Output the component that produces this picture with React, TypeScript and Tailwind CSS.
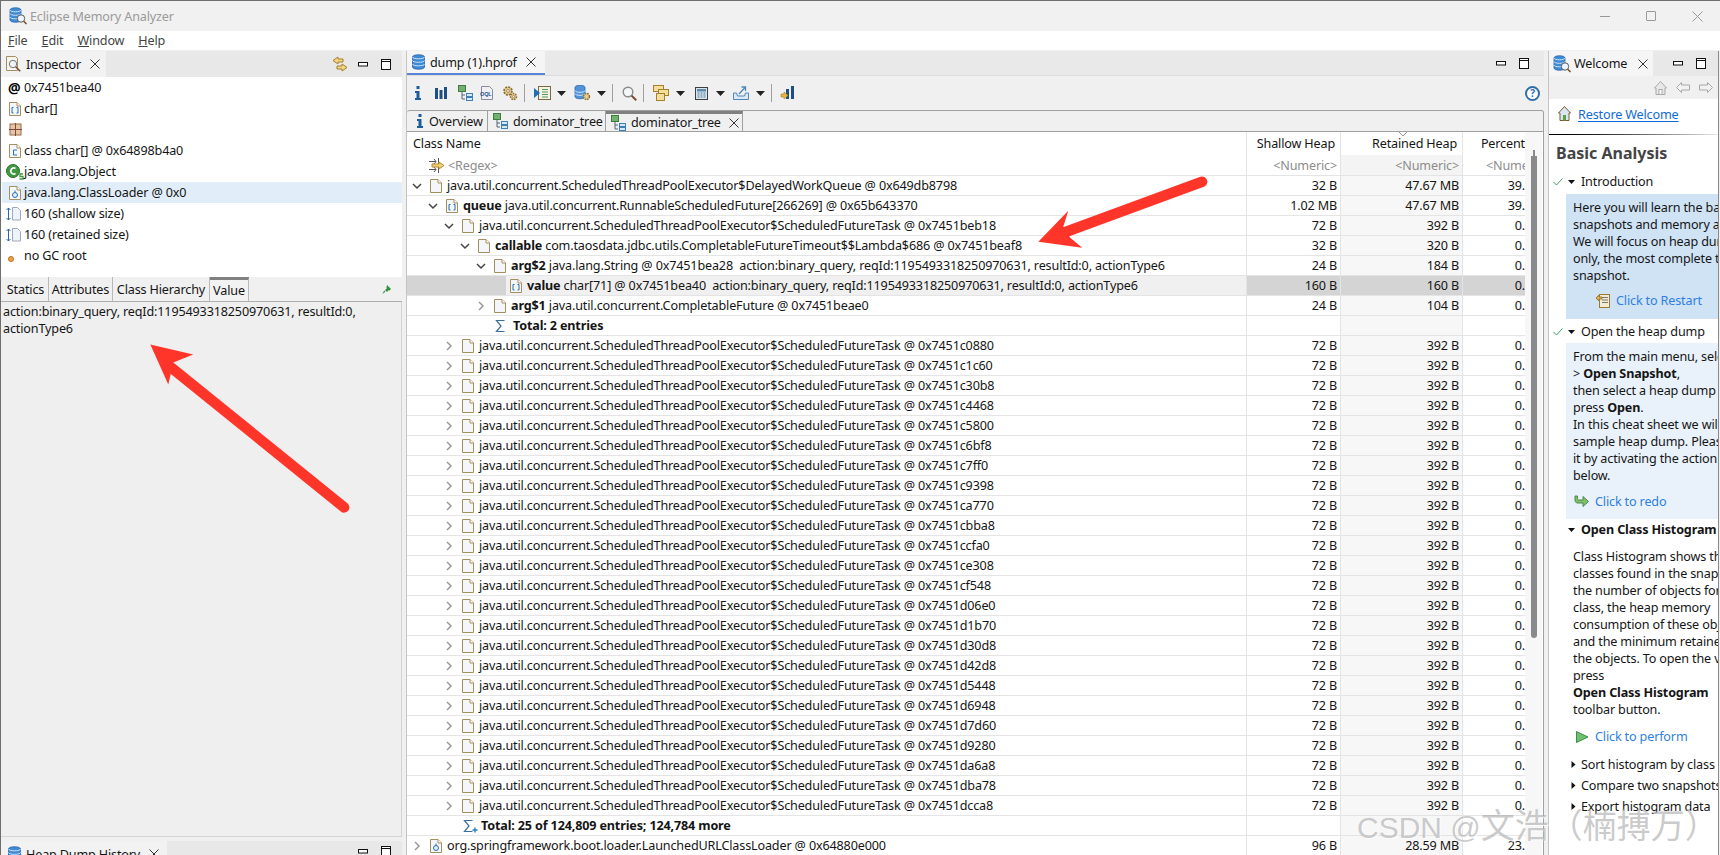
import type { ReactNode } from 'react'

type Kind = 'page' | 'array' | 'loader' | 'sum' | 'sumMore'

interface Row {
  depth: number
  open?: boolean
  kind: Kind
  label?: string
  text: string
  bold?: boolean
  shallow?: string
  retained?: string
  percent?: string
  selected?: boolean
}

const TASK = 'java.util.concurrent.ScheduledThreadPoolExecutor$ScheduledFutureTask @ '

const taskAddresses = [
  'c0880', 'c1c60', 'c30b8', 'c4468', 'c5800', 'c6bf8', 'c7ff0', 'c9398', 'ca770', 'cbba8', 'ccfa0', 'ce308',
  'cf548', 'd06e0', 'd1b70', 'd30d8', 'd42d8', 'd5448', 'd6948', 'd7d60', 'd9280', 'da6a8', 'dba78', 'dcca8',
]

const rows: Row[] = [
  { depth: 0, open: true, kind: 'page', text: 'java.util.concurrent.ScheduledThreadPoolExecutor$DelayedWorkQueue @ 0x649db8798', shallow: '32 B', retained: '47.67 MB', percent: '39.' },
  { depth: 1, open: true, kind: 'array', label: 'queue', text: 'java.util.concurrent.RunnableScheduledFuture[266269] @ 0x65b643370', shallow: '1.02 MB', retained: '47.67 MB', percent: '39.' },
  { depth: 2, open: true, kind: 'page', text: TASK + '0x7451beb18', shallow: '72 B', retained: '392 B', percent: '0.' },
  { depth: 3, open: true, kind: 'page', label: 'callable', text: 'com.taosdata.jdbc.utils.CompletableFutureTimeout$$Lambda$686 @ 0x7451beaf8', shallow: '32 B', retained: '320 B', percent: '0.' },
  { depth: 4, open: true, kind: 'page', label: 'arg$2', text: 'java.lang.String @ 0x7451bea28  action:binary_query, reqId:1195493318250970631, resultId:0, actionType6', shallow: '24 B', retained: '184 B', percent: '0.' },
  { depth: 5, kind: 'array', label: 'value', text: 'char[71] @ 0x7451bea40  action:binary_query, reqId:1195493318250970631, resultId:0, actionType6', shallow: '160 B', retained: '160 B', percent: '0.', selected: true },
  { depth: 4, open: false, kind: 'page', label: 'arg$1', text: 'java.util.concurrent.CompletableFuture @ 0x7451beae0', shallow: '24 B', retained: '104 B', percent: '0.' },
  { depth: 4, kind: 'sum', text: 'Total: 2 entries', bold: true },
  ...taskAddresses.map((a): Row => ({ depth: 2, open: false, kind: 'page', text: TASK + '0x7451' + a, shallow: '72 B', retained: '392 B', percent: '0.' })),
  { depth: 2, kind: 'sumMore', text: 'Total: 25 of 124,809 entries; 124,784 more', bold: true },
  { depth: 0, open: false, kind: 'loader', text: 'org.springframework.boot.loader.LaunchedURLClassLoader @ 0x64880e000', shallow: '96 B', retained: '28.59 MB', percent: '23.' },
]

const Chevron = ({ open }: { open: boolean }) => (
  <svg width="10" height="10" viewBox="0 0 10 10" fill="none" strokeWidth="1.5" stroke={open ? '#444' : '#999'}>
    {open ? <path d="M1 3l4 4 4-4" /> : <path d="M3 1l4 4-4 4" />}
  </svg>
)

const PageShape = ({ children }: { children?: ReactNode }) => (
  <svg width="12" height="14" viewBox="0 0 12 14">
    <path d="M.5.5h7.5l3.5 3.5v9.5h-11z" fill="#f3f7fc" stroke="#a58f5e" />
    <path d="M8 .5v3.5h3.5" fill="#fff" stroke="#a58f5e" />
    {children}
  </svg>
)

const ArrayIcon = () => (
  <PageShape>
    <path d="M4.500 5.500h-1.500v5.500h1.500M7.500 5.500h1.500v5.500h-1.500" fill="none" stroke="#2a6fb0" />
  </PageShape>
)

const LoaderIcon = () => (
  <PageShape>
    <path d="M6 4.500v2" stroke="#2a6fb0" />
    <circle cx="6" cy="9" r="2.500" fill="#e3eefa" stroke="#2a6fb0" />
  </PageShape>
)

const ClassIcon = () => (
  <PageShape>
    <path d="M8 6h-3.500v5h3.500" fill="none" stroke="#2a6fb0" />
  </PageShape>
)

const SumIcon = ({ more }: { more?: boolean }) => (
  <svg width="15" height="14" viewBox="0 0 15 14" fill="none">
    <path d="M9.500 1.500h-8l4.500 5.500-4.500 5.500h8" stroke="#3b6f9e" strokeWidth="1.200" />
    {more && <path d="M12 8.500v5M9.500 11h5" stroke="#2a7fc0" strokeWidth="1.400" />}
  </svg>
)

const RowIcon = ({ kind }: { kind: Kind }) => {
  if (kind === 'array') return <ArrayIcon />
  if (kind === 'loader') return <LoaderIcon />
  if (kind === 'sum') return <SumIcon />
  if (kind === 'sumMore') return <SumIcon more />
  return <PageShape />
}

const CloseX = () => (
  <svg width="10" height="10" viewBox="0 0 10 10" className="shrink-0" stroke="#333" strokeWidth="1" fill="none">
    <path d="M.5.500l9 9M9.500.500l-9 9" />
  </svg>
)

const MinMax = ({ className }: { className?: string }) => (
  <div className={`flex items-center gap-[13px] ${className ?? ''}`}>
    <svg width="10" height="5" viewBox="0 0 10 5" fill="#fff" stroke="#111">
      <rect x=".5" y=".5" width="9" height="3.500" />
    </svg>
    <svg width="10" height="11" viewBox="0 0 10 11" fill="#fff" stroke="#111">
      <rect x=".5" y=".5" width="9" height="10" />
      <path d="M.5 2.500h9" />
    </svg>
  </div>
)

const DbStack = () => (
  <svg width="13" height="16" viewBox="0 0 13 16" className="shrink-0">
    <path d="M.5 3c0-3 12-3 12 0v10c0 3-12 3-12 0z" fill="#3f8ad6" stroke="#2a65a8" strokeWidth=".8" />
    <path d="M.5 3c0 2.400 12 2.400 12 0M.5 6.500c0 2.400 12 2.400 12 0M.5 10c0 2.400 12 2.400 12 0" fill="none" stroke="#cfe3f7" />
  </svg>
)

const DbLensIcon = () => (
  <svg width="18" height="18" viewBox="0 0 18 18" className="shrink-0">
    <path d="M1 3c0-3 11-3 11 0v10c0 3-11 3-11 0z" fill="#3f8ad6" stroke="#2a65a8" strokeWidth=".8" />
    <path d="M1 3c0 2.400 11 2.400 11 0M1 6.500c0 2.400 11 2.400 11 0M1 10c0 2.400 11 2.400 11 0" fill="none" stroke="#cfe3f7" />
    <circle cx="12" cy="11.500" r="3.700" fill="#eef6fc" stroke="#555" />
    <path d="M14.700 14.200l2.800 2.800" stroke="#7a4a2a" strokeWidth="1.500" />
  </svg>
)

const InspectorIcon = () => (
  <svg width="16" height="16" viewBox="0 0 16 16" className="shrink-0">
    <path d="M.5.500h9l2 2v12h-11z" fill="#f4f4f0" stroke="#a58f5e" />
    <circle cx="7" cy="8" r="3.700" fill="#eef3f7" stroke="#777" />
    <path d="M9.700 10.700l4.500 4.500" stroke="#7a4a2a" strokeWidth="1.600" />
  </svg>
)

const InfoIcon = () => (
  <svg width="8" height="14" viewBox="0 0 8 14" fill="#1d5c9c">
    <rect x="2.500" y="0" width="3" height="3" />
    <path d="M1 5h4.500v7h1.500v2h-6v-2h1.500v-5h-1.500z" />
  </svg>
)

const TreeIcon = () => (
  <svg width="15" height="16" viewBox="0 0 15 16" fill="none" className="shrink-0">
    <rect x=".5" y=".5" width="7" height="6" fill="#72b072" stroke="#3f7d3f" />
    <path d="M4 7v7h3M4 10h3" stroke="#567" />
    <rect x="8.500" y="8.500" width="6" height="3" fill="#d8e8f6" stroke="#3f7fb8" />
    <rect x="8.500" y="12.500" width="6" height="3" fill="#d8e8f6" stroke="#3f7fb8" />
  </svg>
)

const GearIcon = ({ size = 16 }: { size?: number }) => (
  <svg width={size} height={size} viewBox="0 0 16 16" fill="#e3c68a" stroke="#8a6a35">
    <circle cx="6" cy="6" r="4" strokeDasharray="2 1.100" strokeWidth="1.600" />
    <circle cx="6" cy="6" r="1.400" fill="#fff" strokeWidth=".7" />
    <circle cx="11.500" cy="11.500" r="3" strokeDasharray="1.600 1" strokeWidth="1.400" />
    <circle cx="11.500" cy="11.500" r="1" fill="#fff" strokeWidth=".6" />
  </svg>
)

const DropArrow = ({ className }: { className: string }) => (
  <svg width="9" height="5" viewBox="0 0 9 5" className={className} fill="#222">
    <path d="M0 0h9l-4.500 5z" />
  </svg>
)

const Sep = ({ className }: { className: string }) => <div className={`h-[18px] w-px bg-[#a0a0a0] ${className}`} />

const Tool = ({ className, children }: { className: string; children: ReactNode }) => (
  <div className={`flex h-5 w-5 items-center justify-center ${className}`}>{children}</div>
)

const Toolbar = () => (
  <div className="flex h-[34px] items-center bg-[#f0f0f0] pl-[1px]">
    <Tool className="ml-0"><InfoIcon /></Tool>
    <Tool className="ml-[3px]">
      <svg width="12" height="12" viewBox="0 0 12 12" fill="#1f4f82"><rect y="1" width="3" height="11" /><rect x="4.500" y="3" width="3" height="9" /><rect x="9" width="3" height="12" /></svg>
    </Tool>
    <Tool className="ml-[4px]"><TreeIcon /></Tool>
    <Tool className="ml-[2px]">
      <svg width="14" height="14" viewBox="0 0 14 14">
        <path d="M1.500.500h8l3 3v10h-11z" fill="#eef0f4" stroke="#8b8b9c" />
        <text x="0" y="9.500" fontSize="5.500" fontWeight="700" fill="#2d4f8f" fontFamily="Liberation Sans">OQL</text>
      </svg>
    </Tool>
    <Tool className="ml-[3px]"><GearIcon /></Tool>
    <Sep className="ml-[4px]" />
    <Tool className="ml-[7px]">
      <svg width="17" height="14" viewBox="0 0 17 14">
        <rect x="4.500" y=".5" width="12" height="13" fill="#f3f2e4" stroke="#7a6a44" />
        <path d="M8 3.500h6M8 6h6M8 8.500h6M8 11h6" stroke="#4d9a5a" />
        <path d="M0 2l6 5-6 5z" fill="#1f6fb5" />
      </svg>
    </Tool>
    <DropArrow className="ml-[5px]" />
    <Tool className="ml-[6px]">
      <svg width="17" height="16" viewBox="0 0 17 16">
        <path d="M1 2.500c0-3 10-3 10 0v9c0 3-10 3-10 0z" fill="#4f94da" stroke="#2a65a8" strokeWidth=".8" />
        <path d="M1 5.500c0 2.400 10 2.400 10 0M1 8.500c0 2.400 10 2.400 10 0" fill="none" stroke="#d3e5f7" />
        <circle cx="12.500" cy="11.500" r="3" fill="#e6c98c" stroke="#8a6a35" strokeDasharray="1.600 .8" strokeWidth="1.400" />
      </svg>
    </Tool>
    <DropArrow className="ml-[5px]" />
    <Sep className="ml-[6px]" />
    <Tool className="ml-[6px]">
      <svg width="15" height="15" viewBox="0 0 15 15" fill="none">
        <circle cx="6" cy="6" r="4.800" fill="#f4f7f8" stroke="#8a8a8a" strokeWidth="1.400" />
        <path d="M9.600 9.600l4.600 4.600" stroke="#7a4a2a" strokeWidth="2" />
      </svg>
    </Tool>
    <Sep className="ml-[4px]" />
    <Tool className="ml-[7px]">
      <svg width="16" height="16" viewBox="0 0 16 16" fill="#f5dd9a" stroke="#a5802f">
        <rect x=".5" y=".5" width="10" height="6" />
        <rect x="5.500" y="4.500" width="10" height="6" />
        <rect x="3.500" y="8.500" width="8" height="7" />
      </svg>
    </Tool>
    <DropArrow className="ml-[5px]" />
    <Tool className="ml-[6px]">
      <svg width="13" height="13" viewBox="0 0 13 13">
        <rect x=".5" y=".5" width="12" height="12" fill="#d8e6ee" stroke="#3f3f3f" />
        <rect x="2" y="2" width="9" height="2.500" fill="#5f8aa8" />
        <path d="M2.500 6h2M5.500 6h2M8.500 6h2M2.500 8h2M5.500 8h2M8.500 8h2M2.500 10h2M5.500 10h2M8.500 10h2" stroke="#4f7c9f" />
      </svg>
    </Tool>
    <DropArrow className="ml-[5px]" />
    <Tool className="ml-[6px]">
      <svg width="16" height="14" viewBox="0 0 16 14" fill="none" stroke="#4f86bc">
        <path d="M.5 7v6.500h15v-6.500h-3l-1 3h-7l-1-3z" fill="#dce9f5" />
        <path d="M6 8l6-6.500M8.500 1h4v4" strokeWidth="1.300" />
      </svg>
    </Tool>
    <DropArrow className="ml-[5px]" />
    <Sep className="ml-[6px]" />
    <Tool className="ml-[5px]">
      <svg width="15" height="14" viewBox="0 0 15 14">
        <rect x="6" y="3" width="3" height="10" fill="#1f4f82" />
        <rect x="11" y="0" width="3" height="13" fill="#1f4f82" />
        <path d="M1 8h3v-2l4 3.500-4 3.500v-2h-3z" fill="#e8b83a" stroke="#a5802f" strokeWidth=".6" />
      </svg>
    </Tool>
    <div className="ml-auto mr-[4px] flex h-[15px] w-[15px] items-center justify-center rounded-full border-2 border-[#2f6fa8] bg-white text-[10px] font-bold leading-none text-[#2f6fa8]">?</div>
  </div>
)

const TableRow = ({ row }: { row: Row }) => {
  const gray = row.selected ? 'bg-[#d4d4d4]' : ''
  const isSum = row.kind === 'sum' || row.kind === 'sumMore'
  return (
    <div className="flex h-5 shrink-0 border-t border-[#e4e4e4]">
      <div className={`flex w-[840px] items-center overflow-hidden border-r border-[#e4e4e4] ${row.selected ? 'bg-[#f0f0f0]' : ''}`}>
        <div className={`flex h-full shrink-0 items-center ${gray}`} style={{ paddingLeft: row.depth * 16 }}>
          <div className="flex w-[19px] justify-center">{row.open !== undefined && <Chevron open={row.open} />}</div>
        </div>
        <div className={`flex w-[21px] shrink-0 items-center ${isSum ? 'pl-[5px]' : 'pl-1'}`}>
          <RowIcon kind={row.kind} />
        </div>
        <div className={`whitespace-pre ${row.bold ? 'ml-[2px] font-bold' : ''}`}>
          {row.label && <span className="font-bold">{row.label} </span>}
          {row.text}
        </div>
      </div>
      <div className={`w-[94px] border-r border-[#e4e4e4] pr-[3px] text-right leading-[19px] ${gray}`}>{row.shallow}</div>
      <div className={`w-[122px] border-r border-[#e4e4e4] pr-[3px] text-right leading-[19px] ${row.selected ? 'bg-[#d4d4d4]' : 'bg-[#f7f7f7]'}`}>{row.retained}</div>
      <div className={`w-[62px] overflow-hidden text-right leading-[19px] ${gray}`}>{row.percent}</div>
    </div>
  )
}

const ResultTable = () => (
  <div className="flex min-h-0 flex-1 bg-white">
    <div className="flex w-[1118px] flex-col">
      <div className="flex h-[23px] shrink-0 leading-[24px]">
        <div className="w-[840px] border-r border-[#e4e4e4] pl-[6px]">Class Name</div>
        <div className="w-[94px] border-r border-[#e4e4e4] pr-[5px] text-right">Shallow Heap</div>
        <div className="relative w-[122px] border-r border-[#e4e4e4] pr-[5px] text-right">
          <svg width="8" height="4" viewBox="0 0 8 4" className="absolute left-[58px] top-0" fill="none" stroke="#999"><path d="M0 0l4 4 4-4" /></svg>
          Retained Heap
        </div>
        <div className="w-[62px] overflow-hidden text-right">Percent</div>
      </div>
      <div className="flex h-5 shrink-0 leading-[22px] text-[#8c8c8c]">
        <div className="flex w-[840px] items-center border-r border-[#e4e4e4] pl-[22px]">
          <svg width="16" height="15" viewBox="0 0 16 15" fill="none" strokeWidth="1" className="mr-[3px]">
            <path d="M0 3.500h7M5 1l2 2.500-2 2.500M9.500 0v6M0 11.500h7M5 9l2 2.500-2 2.500M9.500 9v6" stroke="#555" />
            <path d="M3 6h7v-2l5 3.500-5 3.500v-2h-7z" fill="#f0d27a" stroke="#b58a2a" />
          </svg>
          <span className="pt-[1px]">&lt;Regex&gt;</span>
        </div>
        <div className="w-[94px] border-r border-[#e4e4e4] pr-[3px] text-right">&lt;Numeric&gt;</div>
        <div className="w-[122px] border-r border-[#e4e4e4] bg-[#f4f4f4] pr-[3px] text-right">&lt;Numeric&gt;</div>
        <div className="w-[62px] overflow-hidden whitespace-nowrap pl-[23px]">&lt;Numeric&gt;</div>
      </div>
      {rows.map((row, i) => (
        <TableRow key={i} row={row} />
      ))}
    </div>
    <div className="flex w-[17px] shrink-0 flex-col items-center bg-[#f7f7f7] pt-[18px]">
      <div className="h-[6px] w-[2px] bg-[#8a8a8a]" />
      <div className="h-[482px] w-[6px] rounded-b-[3px] bg-[#8a8a8a]" />
    </div>
  </div>
)

const InnerTab = ({ width, active, icon, text }: { width: string; active?: boolean; icon: ReactNode; text: string }) => (
  <div className={`flex h-full items-center gap-[5px] whitespace-nowrap border-r border-[#a0a0a0] pl-[5px] ${width} ${active ? 'border-t-[3px] border-t-[#808080] bg-[#f0f0f0]' : ''}`}>
    {icon}
    <span>{text}</span>
    {active && <span className="ml-[3px]"><CloseX /></span>}
  </div>
)

const CenterPane = () => (
  <section className="flex min-w-0 flex-1 flex-col border-l border-[#c4c4c4]">
    <div className="flex h-[25px] shrink-0 items-stretch border-b border-[#dcdcdc] bg-[#e9e9e9]">
      <div className="flex w-[138px] items-center gap-[5px] whitespace-nowrap border-b-2 border-[#5b84d8] bg-[#f5f5f5] pl-[5px]">
        <DbStack />
        <span>dump (1).hprof</span>
        <span className="ml-[4px]"><CloseX /></span>
      </div>
      <MinMax className="ml-auto mr-[15px]" />
    </div>
    <Toolbar />
    <div className="flex h-[22px] shrink-0 items-stretch rounded-t-[3px] border-y border-r border-[#a0a0a0] bg-[#f0f0f0]">
      <InnerTab width="w-[81px]" icon={<span className="pl-[4px]"><InfoIcon /></span>} text="Overview" />
      <InnerTab width="w-[118px]" icon={<TreeIcon />} text="dominator_tree" />
      <InnerTab width="w-[137px]" active icon={<TreeIcon />} text="dominator_tree" />
    </div>
    <div className="min-h-0 flex-1 border-r border-[#a0a0a0]">
      <div className="flex h-full flex-col">
        <ResultTable />
      </div>
    </div>
  </section>
)

function SizeIcon() {
  return (
    <svg width="15" height="14" viewBox="0 0 15 14" className="-ml-[3px]" fill="none">
      <path d="M2.500 1v12M.5 3l2-2 2 2M.5 11l2 2 2-2" stroke="#2a65a8" />
      <path d="M6.500.500h5l3 3v9.500h-8z" fill="#eef4fb" stroke="#a0a8b8" />
    </svg>
  )
}

const inspectorRows: { icon: ReactNode; text: string; selected?: boolean }[] = [
  {
    icon: <span className="-ml-[1px] text-[14px] font-bold leading-none text-black">@</span>,
    text: '0x7451bea40',
  },
  { icon: <ArrayIcon />, text: 'char[]' },
  {
    icon: (
      <svg width="13" height="13" viewBox="0 0 13 13">
        <rect x="1" y="1" width="11" height="11" fill="#e6c5a6" stroke="#9a6a4a" />
        <path d="M6.500 0v13M0 6.500h13" stroke="#7a4a3a" />
      </svg>
    ),
    text: '',
  },
  { icon: <ClassIcon />, text: 'class char[] @ 0x64898b4a0' },
  {
    icon: (
      <svg width="18" height="16" viewBox="0 0 18 16" className="-ml-[3px]">
        <circle cx="7" cy="7" r="6.500" fill="#3f9a3f" stroke="#2a6e2a" />
        <path d="M9.500 4.500a3 3 0 1 0 0 5" fill="none" stroke="#fff" strokeWidth="1.600" />
        <path d="M17 10h-3v2.500h3v2.500h-3.500" fill="none" stroke="#3f9a3f" strokeWidth="1.300" />
      </svg>
    ),
    text: 'java.lang.Object',
  },
  { icon: <LoaderIcon />, text: 'java.lang.ClassLoader @ 0x0', selected: true },
  { icon: <SizeIcon />, text: '160 (shallow size)' },
  { icon: <SizeIcon />, text: '160 (retained size)' },
  {
    icon: <span className="ml-[-1px] mt-[6px] block h-[6px] w-[6px] rounded-full border border-[#c46a1a] bg-[#f0a04a]" />,
    text: 'no GC root',
  },
]

const BottomTab = ({ text, width, active }: { text: string; width: string; active?: boolean }) => (
  <div className={`flex h-full items-center justify-center border-r border-[#b8b8b8] ${width} ${active ? 'border-t-[3px] border-t-[#808080] bg-[#f2f2f2]' : ''}`}>
    {text}
  </div>
)

const LeftPane = () => (
  <section className="flex w-[401px] shrink-0 flex-col">
    <div className="flex h-[26px] shrink-0 items-stretch bg-[#e8e8e8]">
      <div className="flex w-[105px] items-center gap-[4px] bg-[#f2f2f2] pl-[5px]">
        <InspectorIcon />
        <span className="pt-[1px]">Inspector</span>
        <span className="ml-[5px]"><CloseX /></span>
      </div>
      <div className="ml-auto flex items-center pr-[11px]">
        <svg width="16" height="16" viewBox="0 0 16 16" fill="#f2d680" stroke="#a5802f" className="mr-[10px]">
          <path d="M6 1l-5 3.500 5 3.500v-2h5v-3h-5z" />
          <path d="M10 8l5 3.500-5 3.500v-2h-5v-3h5z" />
        </svg>
        <MinMax />
      </div>
    </div>
    <div className="flex h-[200px] shrink-0 flex-col bg-white pl-[1px]">
      {inspectorRows.map((r, i) => (
        <div key={i} className={`flex h-[21px] shrink-0 items-center ${r.selected ? 'bg-[#e1eefa]' : ''}`}>
          <div className="flex w-[22px] shrink-0 items-center pl-[7px]">{r.icon}</div>
          <span>{r.text}</span>
        </div>
      ))}
    </div>
    <div className="flex h-[25px] shrink-0 items-stretch border-b border-[#b0b0b0] bg-[#f0f0f0] pl-[2px]">
      <BottomTab text="Statics" width="w-[46px]" />
      <BottomTab text="Attributes" width="w-[64px]" />
      <BottomTab text="Class Hierarchy" width="w-[97px]" />
      <BottomTab text="Value" width="w-[39px]" active />
      <div className="ml-auto flex items-center pr-[11px]">
        <svg width="9" height="9" viewBox="0 0 9 9" fill="#2f8f3f">
          <path d="M5 0l4 4-1.500 1.500-1-.3-1.500 1.800-2-2 1.800-1.500-.3-1zM2.200 5.600l1.200 1.200-3 2.200z" />
        </svg>
      </div>
    </div>
    <div className="flex-1 border-b border-r border-[#d4d4d4] bg-[#efefef] pl-[2px] pt-[1px] leading-[17px]">
      <div>action:binary_query, reqId:1195493318250970631, resultId:0,</div>
      <div>actionType6</div>
    </div>
    <div className="mt-[4px] flex h-[14px] shrink-0 items-start overflow-hidden bg-[#e8e8e8]">
      <div className="flex h-[26px] w-[166px] items-center gap-[5px] whitespace-nowrap bg-[#f2f2f2] pl-[7px]">
        <DbStack />
        <span>Heap Dump History</span>
        <span className="ml-[4px]"><CloseX /></span>
      </div>
      <MinMax className="ml-auto mr-[11px] mt-[5px]" />
    </div>
  </section>
)

const Triangle = ({ right }: { right?: boolean }) => (
  <svg width="7" height="7" viewBox="0 0 7 7" fill="#111" className="shrink-0">
    {right ? <path d="M1.500 0l4 3.500-4 3.500z" /> : <path d="M0 2h7l-3.500 4z" />}
  </svg>
)

const Check = () => (
  <svg width="10" height="8" viewBox="0 0 10 8" fill="none" stroke="#3f9a6a" className="shrink-0">
    <path d="M.5 4l3 3 6-6.500" />
  </svg>
)

const CheatStep = ({ checked, bold, text }: { checked?: boolean; bold?: boolean; text: string }) => (
  <div className="flex h-[17px] items-center whitespace-nowrap">
    <div className="w-[19px] shrink-0 pl-[4px]">{checked && <Check />}</div>
    <div className="w-[13px] shrink-0"><Triangle /></div>
    <span className={bold ? 'font-bold' : ''}>{text}</span>
  </div>
)

const SubStep = ({ text }: { text: string }) => (
  <div className="flex h-[21px] shrink-0 items-center whitespace-nowrap pl-[21px]">
    <Triangle right />
    <span className="ml-[4px]">{text}</span>
  </div>
)

const ActionLink = ({ icon, text, className }: { icon: ReactNode; text: string; className: string }) => (
  <div className={`flex items-center text-[#2f7fe0] ${className}`}>
    {icon}
    <span>{text}</span>
  </div>
)

const RightPane = () => (
  <section className="flex w-[171px] shrink-0 flex-col overflow-hidden border-x border-[#c4c4c4] border-r-[#8a8a8a]">
    <div className="flex h-[25px] shrink-0 items-stretch bg-[#e8e8e8]">
      <div className="flex w-[104px] items-center gap-[3px] bg-[#f5f5f5] pl-[4px]">
        <DbLensIcon />
        <span>Welcome</span>
        <span className="ml-[8px]"><CloseX /></span>
      </div>
      <MinMax className="ml-auto mr-[12px]" />
    </div>
    <div className="flex h-[23px] shrink-0 items-center justify-end gap-[9px] bg-[#f0f0f0] pr-[5px]">
      <svg width="13" height="14" viewBox="0 0 13 14" fill="#e8e8e8" stroke="#a8a8a8"><path d="M.5 7l6-6.500 6 6.500h-1.500v6.500h-9v-6.500z" /><rect x="5" y="8.500" width="3" height="5" fill="#fff" /></svg>
      <svg width="14" height="11" viewBox="0 0 14 11" fill="#f2f2f2" stroke="#a8a8a8"><path d="M.5 5.500l5-5v2.500h8v5h-8v2.500z" /></svg>
      <svg width="14" height="11" viewBox="0 0 14 11" fill="#f2f2f2" stroke="#a8a8a8"><path d="M13.500 5.500l-5-5v2.500h-8v5h8v2.500z" /></svg>
    </div>
    <div className="flex min-h-0 flex-1 flex-col bg-white">
      <div className="flex h-[35px] shrink-0 items-start pl-[9px] pt-[7px] text-[#0f6bd8]">
        <svg width="13" height="15" viewBox="0 0 13 15" className="mr-[7px]" stroke="#7a5a2a" fill="#d9e6f2"><path d="M.5 7l6-6.500 6 6.500h-1.500v7.500h-9v-7.500z" /><rect x="5" y="9" width="3" height="5.500" fill="#5aa04a" stroke="none" /></svg>
        <span className="underline underline-offset-2">Restore Welcome</span>
      </div>
      <div className="h-px shrink-0 bg-gradient-to-r from-black to-[#e8e8e8]" />
      <div className="px-[7px] pt-[6px] text-[16px] font-bold leading-[24px] tracking-normal text-[#444]">Basic Analysis</div>
      <div className="mt-[8px]"><CheatStep checked text="Introduction" /></div>
      <div className="ml-[17px] mt-[4px] h-[125px] shrink-0 whitespace-nowrap bg-[#cfe3f5] pl-[7px] pt-[5px]">
        <div>Here you will learn the basics</div>
        <div>snapshots and memory analysis</div>
        <div>We will focus on heap dumps</div>
        <div>only, the most complete type of</div>
        <div>snapshot.</div>
        <ActionLink
          className="mt-[8px] pl-[23px]"
          text="Click to Restart"
          icon={<svg width="15" height="14" viewBox="0 0 15 14" className="mr-[5px]" fill="#f3ecd2" stroke="#9a7a3a"><rect x="3.500" y=".5" width="10" height="13" /><path d="M6 3.500h6M6 6h6M6 8.500h6" stroke="#777" /><path d="M0 4l3-3v2h3v2h-3v2z" fill="#e8b83a" /></svg>}
        />
      </div>
      <div className="mt-[4px]"><CheatStep checked text="Open the heap dump" /></div>
      <div className="ml-[17px] mt-[3px] h-[176px] shrink-0 whitespace-nowrap bg-[#e9f2fb] pl-[7px] pt-[5px]">
        <div>From the main menu, select File</div>
        <div>&gt; <b>Open Snapshot</b>,</div>
        <div>then select a heap dump and</div>
        <div>press <b>Open</b>.</div>
        <div>In this cheat sheet we will use a</div>
        <div>sample heap dump. Please open</div>
        <div>it by activating the action</div>
        <div>below.</div>
        <ActionLink
          className="mt-[9px] pl-[1px]"
          text="Click to redo"
          icon={<svg width="15" height="13" viewBox="0 0 15 13" className="mr-[6px]" fill="#7fbf6a" stroke="#4a8a4a"><path d="M1 1v4c0 2 1 3 3 3h5v3.500l5.500-5-5.500-5v3.500h-4c-1 0-1.500-.5-1.500-1.500v-2.500z" /></svg>}
        />
      </div>
      <div className="mt-[2px]"><CheatStep bold text="Open Class Histogram" /></div>
      <div className="ml-[17px] mt-[10px] h-[206px] shrink-0 whitespace-nowrap pl-[7px]">
        <div>Class Histogram shows the</div>
        <div>classes found in the snapshot,</div>
        <div>the number of objects for each</div>
        <div>class, the heap memory</div>
        <div>consumption of these objects,</div>
        <div>and the minimum retained size</div>
        <div>the objects. To open the view</div>
        <div>press</div>
        <div><b>Open Class Histogram</b></div>
        <div>toolbar button.</div>
        <ActionLink
          className="mt-[10px] pl-[3px]"
          text="Click to perform"
          icon={<svg width="13" height="12" viewBox="0 0 13 12" className="mr-[6px]" fill="#6fc06f" stroke="#3f8a4f"><path d="M.5.500l11.500 5.500-11.500 5.500z" /></svg>}
        />
      </div>
      <SubStep text="Sort histogram by class" />
      <SubStep text="Compare two snapshots" />
      <SubStep text="Export histogram data" />
    </div>
  </section>
)

const Annotations = () => (
  <svg className="pointer-events-none absolute inset-0 h-full w-full" viewBox="0 0 1720 855">
    <g fill="#ff3529" stroke="#ff3529">
      <path d="M343 507L170 367" strokeWidth="10.500" strokeLinecap="round" fill="none" />
      <path d="M149 344L192 354L172 362L167 384z" strokeWidth="0" />
      <path d="M1202 181L1066 231" strokeWidth="10.500" strokeLinecap="round" fill="none" />
      <path d="M1038 241L1068 210L1063 226L1070 237L1082 247z" strokeWidth="0" />
    </g>
  </svg>
)

const App = () => (
  <div className="relative flex h-[855px] w-[1720px] flex-col overflow-hidden border-l border-t border-[#6e6e6e] bg-[#f0f0f0] font-['Noto_Sans','Noto_Sans_CJK_SC',sans-serif] text-[12.6px] leading-[17px] tracking-[-0.15px] text-[#151515]">
    <header className="flex h-[30px] shrink-0 items-center bg-[#f1f1f1] pl-[8px] text-[#9a9a9a]">
      <DbLensIcon />
      <span className="ml-[3px]">Eclipse Memory Analyzer</span>
      <div className="ml-auto flex items-center text-[#9a9a9a]">
        <div className="flex w-[46px] justify-center"><div className="h-px w-[10px] bg-[#999]" /></div>
        <div className="flex w-[46px] justify-center"><div className="h-[10px] w-[10px] rounded-[1px] border border-[#999]" /></div>
        <div className="flex w-[46px] justify-center">
          <svg width="11" height="11" viewBox="0 0 11 11" stroke="#999" fill="none"><path d="M.5.500l10 10M10.500.500l-10 10" /></svg>
        </div>
      </div>
    </header>
    <nav className="flex h-[19px] shrink-0 items-center gap-[14px] bg-white pl-[7px] text-[#444]">
      <span><u>F</u>ile</span>
      <span><u>E</u>dit</span>
      <span><u>W</u>indow</span>
      <span><u>H</u>elp</span>
    </nav>
    <main className="mt-[1px] flex min-h-0 flex-1 gap-[4px] pr-[1px]">
      <LeftPane />
      <CenterPane />
      <RightPane />
    </main>
    <Annotations />
    <div className="pointer-events-none absolute left-[1356px] top-[807px] whitespace-nowrap font-['Liberation_Sans','Noto_Sans_CJK_SC',sans-serif] text-[30px] leading-[36px] tracking-normal text-[#a8a8a8]/60 [text-shadow:1px_1px_0_rgba(255,255,255,0.8)]">
      CSDN @<span className="text-[34px]">文浩（楠搏万）</span>
    </div>
  </div>
)

export default App
